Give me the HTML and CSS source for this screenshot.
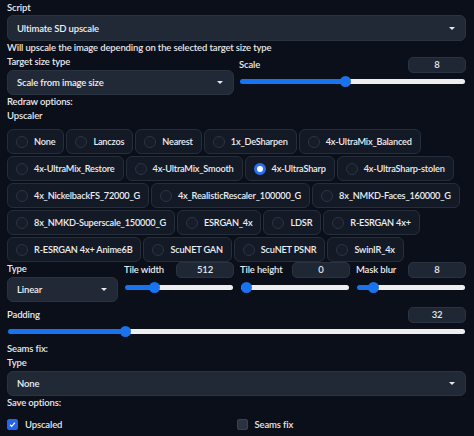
FILE: index.html
```html
<!DOCTYPE html>
<html lang="en">
<head>
  <meta charset="UTF-8" />
  <title>Ultimate SD upscale</title>
  <link rel="stylesheet" href="styles.css">
</head>
<body>

<!-- Script picker -->
<div class="label">Script</div>
<div class="select tall">
  <span>Ultimate SD upscale</span>
  <span class="caret"></span>
</div>
<div class="note">Will upscale the image depending on the selected target size type</div>

<!-- Target size / scale -->
<div class="split">
  <div class="col left">
    <div class="label">Target size type</div>
    <div class="select">
      <span>Scale from image size</span>
      <span class="caret"></span>
    </div>
  </div>
  <div class="col right">
    <div class="head">
      <span class="label">Scale</span>
      <span class="num">8</span>
    </div>
    <div class="slider"><div class="track" style="--v: 46.7%"></div><div class="knobs"><div class="thumb" style="left: 46.7%"></div></div></div>
  </div>
</div>

<div class="label">Redraw options:</div>
<div class="label">Upscaler</div>

<div class="radios">
  <div class="radio"><i></i>None</div>
  <div class="radio"><i></i>Lanczos</div>
  <div class="radio"><i></i>Nearest</div>
  <div class="radio"><i></i>1x_DeSharpen</div>
  <div class="radio"><i></i>4x-UltraMix_Balanced</div>
  <div class="radio"><i></i>4x-UltraMix_Restore</div>
  <div class="radio"><i></i>4x-UltraMix_Smooth</div>
  <div class="radio on"><i></i>4x-UltraSharp</div>
  <div class="radio"><i></i>4x-UltraSharp-stolen</div>
  <div class="radio"><i></i>4x_NickelbackFS_72000_G</div>
  <div class="radio"><i></i>4x_RealisticRescaler_100000_G</div>
  <div class="radio"><i></i>8x_NMKD-Faces_160000_G</div>
  <div class="radio"><i></i>8x_NMKD-Superscale_150000_G</div>
  <div class="radio"><i></i>ESRGAN_4x</div>
  <div class="radio"><i></i>LDSR</div>
  <div class="radio"><i></i>R-ESRGAN 4x+</div>
  <div class="radio"><i></i>R-ESRGAN 4x+ Anime6B</div>
  <div class="radio"><i></i>ScuNET GAN</div>
  <div class="radio"><i></i>ScuNET PSNR</div>
  <div class="radio"><i></i>SwinIR_4x</div>
</div>

<!-- Tile settings -->
<div class="tiles">
  <div class="tcol type">
    <div class="label">Type</div>
    <div class="select">
      <span>Linear</span>
      <span class="caret"></span>
    </div>
  </div>
  <div class="tcol">
    <div class="head">
      <span class="label">Tile width</span>
      <span class="num">512</span>
    </div>
    <div class="slider"><div class="track" style="--v: 25%"></div><div class="knobs"><div class="thumb" style="left: 25%"></div></div></div>
  </div>
  <div class="tcol">
    <div class="head">
      <span class="label">Tile height</span>
      <span class="num">0</span>
    </div>
    <div class="slider"><div class="track" style="--v: 0%"></div><div class="knobs"><div class="thumb" style="left: 0%"></div></div></div>
  </div>
  <div class="tcol">
    <div class="head">
      <span class="label">Mask blur</span>
      <span class="num">8</span>
    </div>
    <div class="slider"><div class="track" style="--v: 11.5%"></div><div class="knobs"><div class="thumb" style="left: 11.5%"></div></div></div>
  </div>
</div>

<div class="padrow">
  <div class="head">
    <span class="label">Padding</span>
    <span class="num">32</span>
  </div>
  <div class="slider"><div class="track" style="--v: 25%"></div><div class="knobs"><div class="thumb" style="left: 25%"></div></div></div>
</div>

<div class="label gap">Seams fix:</div>
<div class="label">Type</div>
<div class="select">
  <span>None</span>
  <span class="caret"></span>
</div>

<div class="label">Save options:</div>
<div class="checks">
  <label class="check on"><i></i>Upscaled</label>
  <label class="check"><i></i>Seams fix</label>
</div>

</body>
</html>
```

FILE: styles.css
```css
* { box-sizing: border-box; }
body {
  margin: 0;
  padding: 1px 8px 0 7px;
  background-color: #0b0f19;
  color: #e5e7eb;
  font-family: 'Lato', 'Liberation Sans', sans-serif;
  font-size: 9.5px;
  letter-spacing: -0.15px;
  overflow: hidden;
}

.label {
  display: block;
  height: 14px;
  line-height: 14px;
  font-weight: 600;
  color: #e8eaed;
}
.label.gap { margin-top: 3px; }

.select {
  display: flex;
  align-items: center;
  justify-content: space-between;
  height: 25px;
  margin-top: 1px;
  padding: 0 10px 0 9px;
  background-color: #212937;
  border: 1px solid #2a3342;
  border-radius: 6px;
  font-weight: 600;
  color: #eef0f3;
}
.select.tall { height: 26px; margin-top: 0; }

.caret {
  width: 0;
  height: 0;
  border-left: 3px solid transparent;
  border-right: 3px solid transparent;
  border-top: 3px solid #e5e7eb;
}

.note {
  height: 14px;
  line-height: 14px;
  font-weight: 600;
}

.split {
  display: flex;
  gap: 5px;
}
.split .left { width: 227px; }
.split .right { flex: 1; }

.head {
  display: flex;
  align-items: center;
  justify-content: space-between;
  height: 16px;
  margin-top: 2px;
}
.num {
  width: 58px;
  height: 16px;
  text-align: center;
  background-color: #1f2735;
  border: 1px solid #2a3342;
  border-radius: 5px;
  font-weight: 600;
  line-height: 14px;
}

.slider {
  position: relative;
  height: 16px;
  margin: 0 1px;
}
.track {
  position: absolute;
  left: 0; right: 0; top: 6px;
  height: 5px;
  border-radius: 3px;
  background: linear-gradient(to right, #1a73ee var(--v), #eeeeee var(--v));
}
.knobs {
  position: absolute;
  left: 0; right: 11px; top: 0; bottom: 0;
}
.thumb {
  position: absolute;
  top: 3px;
  width: 11px;
  height: 11px;
  border-radius: 50%;
  background-color: #1a73ee;
}

.radios {
  display: flex;
  flex-wrap: wrap;
  gap: 2px 2px;
  margin-top: 6px;
}
.radio {
  display: flex;
  align-items: center;
  gap: 6px;
  height: 25px;
  padding: 0 8px 0 8px;
  background-color: #141a25;
  border: 1px solid #262e3b;
  border-radius: 6px;
  font-weight: 600;
  font-size: 9.2px;
  letter-spacing: -0.2px;
  color: #eceef2;
}
.radio i {
  width: 12px;
  height: 12px;
  border-radius: 50%;
  background-color: #161d29;
  border: 1px solid #2c3544;
}
.radio.on i {
  background-color: #fff;
  border: 3.5px solid #2a6ff0;
}

.tiles {
  display: flex;
  gap: 6px;
}
.tcol { flex: 1; }
.tcol.type { flex: 0 0 111px; }
.tcol .head { margin-top: 0; }
.tcol .slider { margin-top: 1px; }

.padrow { margin-top: 5px; }
.padrow .head { margin-top: 0; }

.checks {
  display: flex;
  margin-top: 7px;
}
.check {
  display: flex;
  align-items: center;
  gap: 7px;
  width: 231px;
  height: 14px;
  font-weight: 600;
}
.check i {
  width: 11px;
  height: 11px;
  border-radius: 2px;
  background-color: #2a3140;
  border: 1px solid #394253;
}
.check.on i {
  background-color: #2563eb;
  border-color: #2563eb;
  background-image: url("data:image/svg+xml,%3Csvg xmlns='http://www.w3.org/2000/svg' viewBox='0 0 11 11'%3E%3Cpath d='M2.5 5.8l2 2 4-4.6' fill='none' stroke='white' stroke-width='1.5'/%3E%3C/svg%3E");
}
```
